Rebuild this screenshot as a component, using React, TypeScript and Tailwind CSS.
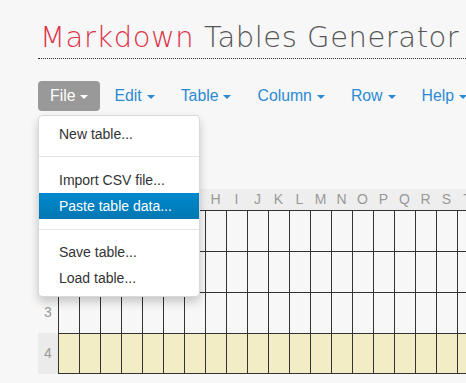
import { Fragment } from "react";

const menu = ["File", "Edit", "Table", "Column", "Row", "Help"];
const cols = "ABCDEFGHIJKLMNOPQRSTUVWXYZ".split("");
const rows = [1, 2, 3, 4];

function Caret({ white }: { white?: boolean }) {
  return (
    <span
      className={`ml-[5px] inline-block h-0 w-0 border-x-[4px] border-t-[4px] border-x-transparent align-middle ${
        white ? "border-t-white" : "border-t-[#2a8ad4]"
      }`}
    />
  );
}

function FileMenu() {
  const item = "block px-5 py-[3px] leading-5 text-[14px] whitespace-nowrap";
  return (
    <div className="absolute left-0 top-full z-10 mt-1 w-[162px] rounded-[5px] border border-black/15 bg-white py-[5px] shadow-[0_5px_10px_rgba(0,0,0,0.2)]">
      <div className={`${item} text-[#333]`}>New table...</div>
      <div className="mt-[9px] mb-[10px] h-px bg-[#e5e5e5]" />
      <div className={`${item} text-[#333]`}>Import CSV file...</div>
      <div className={`${item} bg-gradient-to-b from-[#0088cc] to-[#0077b3] text-white`}>
        Paste table data...
      </div>
      <div className="mt-[10px] mb-[9px] h-px bg-[#e5e5e5]" />
      <div className={`${item} text-[#333]`}>Save table...</div>
      <div className={`${item} text-[#333]`}>Load table...</div>
    </div>
  );
}

export default function App() {
  return (
    <div className="h-[383px] w-[466px] overflow-hidden bg-[#f7f7f7] font-['Liberation_Sans',Arial,sans-serif]">
      <div className="pl-[38px]">
        {/* header */}
        <h1 className="whitespace-nowrap border-b border-dotted border-[#333] pb-[3px] pl-[2px] pt-[19px] font-['DejaVu_Sans',sans-serif] text-[29px] font-extralight leading-[36px] tracking-[0.55px] text-[#555]">
          <span className="text-[#dd3349]">Markdown</span> Tables Generator
        </h1>

        {/* menu bar */}
        <ul className="relative mt-[22px] flex gap-[2px] text-[15.8px] leading-5">
          {menu.map((m, i) => (
            <li key={m} className="relative">
              <span
                className={`block whitespace-nowrap rounded-[4px] px-3 py-[5px] ${
                  i === 0 ? "bg-[#999] text-white" : "text-[#2a8ad4]"
                }`}
              >
                {m}
                <Caret white={i === 0} />
              </span>
              {i === 0 && <FileMenu />}
            </li>
          ))}
        </ul>

        {/* grid */}
        <div className="mt-[78px] grid w-max grid-cols-[20px_repeat(26,21px)] text-[14px]">
          <div className="h-[21px] bg-[#eee]" />
          {cols.map((c) => (
            <div key={c} className="flex h-[21px] items-center justify-center bg-[#eee] text-[#999]">
              {c}
            </div>
          ))}
          {rows.map((r) => (
            <Fragment key={r}>
              <div
                className={`flex h-[41px] items-center justify-center text-[#999] ${
                  r === 4 ? "bg-[#ebebeb]" : ""
                }`}
              >
                {r}
              </div>
              {cols.map((c) => (
                <div
                  key={c}
                  className={`h-[41px] border-l border-t border-[#333] ${
                    r === 4 ? "border-b bg-[#f2edc4]" : ""
                  }`}
                />
              ))}
            </Fragment>
          ))}
        </div>
      </div>
    </div>
  );
}
